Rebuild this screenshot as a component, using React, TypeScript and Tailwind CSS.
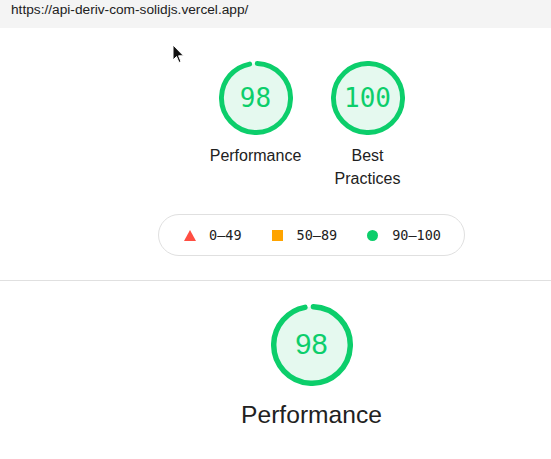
const C = 2 * Math.PI * 56;

function Gauge({ score, sizeClass, numClass }: { score: number; sizeClass: string; numClass: string }) {
  const full = score >= 100;
  const dash = full ? `${C} ${C}` : `${(score / 100) * C - 6} ${C}`;
  return (
    <div className={`relative ${sizeClass}`}>
      <svg viewBox="0 0 120 120" className="h-full w-full">
        <circle cx="60" cy="60" r="56" fill="#e5f9ef" />
        <circle
          cx="60"
          cy="60"
          r="56"
          fill="none"
          stroke="#0cce6b"
          strokeWidth="8"
          strokeLinecap={full ? 'butt' : 'round'}
          strokeDasharray={dash}
          transform="rotate(-87.9 60 60)"
        />
      </svg>
      <div className={`absolute inset-0 flex items-center justify-center text-[#0cce6b] ${numClass}`}>
        {score}
      </div>
    </div>
  );
}

const SCORES = [
  { score: 98, label: ['Performance'] },
  { score: 100, label: ['Best', 'Practices'] },
];

export default function App() {
  return (
    <div className="relative h-[459px] w-[551px] overflow-hidden bg-white font-['Liberation_Sans',Arial,sans-serif] text-[#212121]">
      {/* top bar */}
      <div className="h-[28px] bg-[#f4f4f4] px-[11px] text-[13.7px] leading-[20px]">
        https://api-deriv-com-solidjs.vercel.app/
      </div>

      {/* summary gauges */}
      <div className="flex flex-col items-center pl-[72px] pt-[33px]">
        <div className="flex">
          {SCORES.map((s) => (
            <div key={s.score} className="flex w-[112px] flex-col items-center">
              <Gauge
                score={s.score}
                sizeClass="h-[74px] w-[74px]"
                numClass="font-['DejaVu_Sans_Mono',monospace] text-[26px]"
              />
              <div className="mt-[9px] text-center text-[16px] leading-[23px]">
                {s.label.map((l) => (
                  <div key={l}>{l}</div>
                ))}
              </div>
            </div>
          ))}
        </div>

        {/* legend */}
        <div className="mt-[24px] flex h-[42px] w-[307px] items-center rounded-full border border-[#e0e0e0] pl-[25px] font-['DejaVu_Sans_Mono',monospace] text-[13.5px]">
          <svg width="12" height="11" viewBox="0 0 12 11" className="shrink-0">
            <polygon points="6,0 12,11 0,11" fill="#ff4e42" />
          </svg>
          <span className="ml-[13px]">0–49</span>
          <span className="ml-[30px] h-[11px] w-[11px] shrink-0 bg-[#ffa400]" />
          <span className="ml-[14px]">50–89</span>
          <span className="ml-[30px] h-[11px] w-[11px] shrink-0 rounded-full bg-[#0cce6b]" />
          <span className="ml-[14px]">90–100</span>
        </div>
      </div>

      {/* divider */}
      <div className="mt-[24px] h-px w-full bg-[#e0e0e0]" />

      {/* category header */}
      <div className="flex flex-col items-center pl-[72px] pt-[23px]">
        <Gauge
          score={98}
          sizeClass="h-[82px] w-[82px]"
          numClass="font-['Liberation_Sans',Arial,sans-serif] text-[29px]"
        />
        <div className="mt-[14px] text-[24.6px] leading-[30px]">Performance</div>
      </div>

      {/* mouse pointer */}
      <svg
        width="13"
        height="20"
        viewBox="0 0 13 20"
        className="absolute left-[172px] top-[44px]"
      >
        <path d="M1 1 L1 16 L4.5 12.5 L7 18.5 L9 17.6 L6.6 11.8 L11.5 11.8 Z" fill="#111" stroke="#fff" strokeWidth="1" />
      </svg>
    </div>
  );
}
